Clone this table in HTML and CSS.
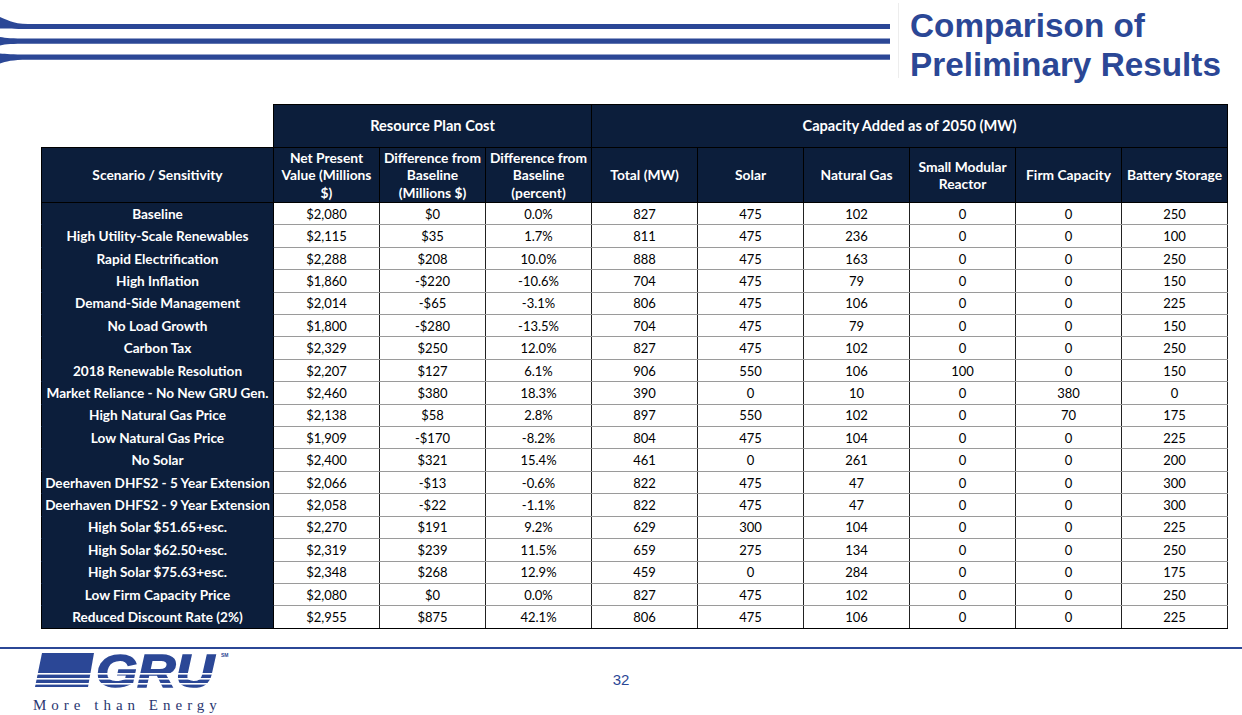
FILE: index.html
```html
<!DOCTYPE html>
<html>
<head>
<meta charset="utf-8">
<link rel="stylesheet" href="styles.css">
</head>
<body>
<div class="page">
  <header class="top">
    <svg class="lines" width="890" height="66" viewBox="0 0 890 66">
      <path d="M0,17 C6,19 12,24 28,24 L890,24 L890,29 L28,29 C14,29 6,28.5 0,28.5 Z" fill="#2b4796"/>
      <path d="M0,37 C6,38 12,38.5 28,38.5 L890,38.5 L890,43.8 L28,43.8 C12,43.8 6,44 0,45.5 Z" fill="#2b4796"/>
      <path d="M0,53.5 C6,54 12,54.5 28,54.5 L890,54.5 L890,59.8 L28,59.8 C12,59.8 6,61.5 0,63.5 Z" fill="#2b4796"/>
    </svg>
    <div class="divider"></div>
    <h1 class="title">Comparison of<br>Preliminary Results</h1>
  </header>

  <main class="table-wrap">
    <table class="data">
      <colgroup>
        <col class="c-first">
        <col class="c-num"><col class="c-num"><col class="c-num">
        <col class="c-num"><col class="c-num"><col class="c-num">
        <col class="c-num"><col class="c-num"><col class="c-num">
      </colgroup>
      <thead>
        <tr class="h1">
          <td class="blank"></td>
          <th colspan="3">Resource Plan Cost</th>
          <th colspan="6">Capacity Added as of 2050 (MW)</th>
        </tr>
        <tr class="h2">
          <th>Scenario / Sensitivity</th>
          <th>Net Present<br>Value (Millions<br>$)</th>
          <th>Difference from<br>Baseline<br>(Millions $)</th>
          <th>Difference from<br>Baseline<br>(percent)</th>
          <th>Total (MW)</th>
          <th>Solar</th>
          <th>Natural Gas</th>
          <th>Small Modular<br>Reactor</th>
          <th>Firm Capacity</th>
          <th>Battery Storage</th>
        </tr>
      </thead>
      <tbody>
        <tr><th>Baseline</th><td>$2,080</td><td>$0</td><td>0.0%</td><td>827</td><td>475</td><td>102</td><td>0</td><td>0</td><td>250</td></tr>
        <tr><th>High Utility-Scale Renewables</th><td>$2,115</td><td>$35</td><td>1.7%</td><td>811</td><td>475</td><td>236</td><td>0</td><td>0</td><td>100</td></tr>
        <tr><th>Rapid Electrification</th><td>$2,288</td><td>$208</td><td>10.0%</td><td>888</td><td>475</td><td>163</td><td>0</td><td>0</td><td>250</td></tr>
        <tr><th>High Inflation</th><td>$1,860</td><td>-$220</td><td>-10.6%</td><td>704</td><td>475</td><td>79</td><td>0</td><td>0</td><td>150</td></tr>
        <tr><th>Demand-Side Management</th><td>$2,014</td><td>-$65</td><td>-3.1%</td><td>806</td><td>475</td><td>106</td><td>0</td><td>0</td><td>225</td></tr>
        <tr><th>No Load Growth</th><td>$1,800</td><td>-$280</td><td>-13.5%</td><td>704</td><td>475</td><td>79</td><td>0</td><td>0</td><td>150</td></tr>
        <tr><th>Carbon Tax</th><td>$2,329</td><td>$250</td><td>12.0%</td><td>827</td><td>475</td><td>102</td><td>0</td><td>0</td><td>250</td></tr>
        <tr><th>2018 Renewable Resolution</th><td>$2,207</td><td>$127</td><td>6.1%</td><td>906</td><td>550</td><td>106</td><td>100</td><td>0</td><td>150</td></tr>
        <tr><th>Market Reliance - No New GRU Gen.</th><td>$2,460</td><td>$380</td><td>18.3%</td><td>390</td><td>0</td><td>10</td><td>0</td><td>380</td><td>0</td></tr>
        <tr><th>High Natural Gas Price</th><td>$2,138</td><td>$58</td><td>2.8%</td><td>897</td><td>550</td><td>102</td><td>0</td><td>70</td><td>175</td></tr>
        <tr><th>Low Natural Gas Price</th><td>$1,909</td><td>-$170</td><td>-8.2%</td><td>804</td><td>475</td><td>104</td><td>0</td><td>0</td><td>225</td></tr>
        <tr><th>No Solar</th><td>$2,400</td><td>$321</td><td>15.4%</td><td>461</td><td>0</td><td>261</td><td>0</td><td>0</td><td>200</td></tr>
        <tr><th>Deerhaven DHFS2 - 5 Year Extension</th><td>$2,066</td><td>-$13</td><td>-0.6%</td><td>822</td><td>475</td><td>47</td><td>0</td><td>0</td><td>300</td></tr>
        <tr><th>Deerhaven DHFS2 - 9 Year Extension</th><td>$2,058</td><td>-$22</td><td>-1.1%</td><td>822</td><td>475</td><td>47</td><td>0</td><td>0</td><td>300</td></tr>
        <tr><th>High Solar $51.65+esc.</th><td>$2,270</td><td>$191</td><td>9.2%</td><td>629</td><td>300</td><td>104</td><td>0</td><td>0</td><td>225</td></tr>
        <tr><th>High Solar $62.50+esc.</th><td>$2,319</td><td>$239</td><td>11.5%</td><td>659</td><td>275</td><td>134</td><td>0</td><td>0</td><td>250</td></tr>
        <tr><th>High Solar $75.63+esc.</th><td>$2,348</td><td>$268</td><td>12.9%</td><td>459</td><td>0</td><td>284</td><td>0</td><td>0</td><td>175</td></tr>
        <tr><th>Low Firm Capacity Price</th><td>$2,080</td><td>$0</td><td>0.0%</td><td>827</td><td>475</td><td>102</td><td>0</td><td>0</td><td>250</td></tr>
        <tr><th>Reduced Discount Rate (2%)</th><td>$2,955</td><td>$875</td><td>42.1%</td><td>806</td><td>475</td><td>106</td><td>0</td><td>0</td><td>225</td></tr>
      </tbody>
    </table>
  </main>

  <footer class="foot">
    <div class="logo">
      <div class="logo-mark">
        <svg width="200" height="54" viewBox="0 0 200 54">
          <polygon points="12,10 64,10 58,44 5,44" fill="#2b4796"/>
          <text x="66" y="44" font-family="Liberation Sans, Arial, sans-serif" font-weight="bold" font-style="italic" font-size="47" textLength="118" lengthAdjust="spacingAndGlyphs" fill="#2b4796" stroke="#2b4796" stroke-width="1.6">GRU</text>
          <rect x="0" y="30" width="200" height="1.6" fill="#fff"/>
          <rect x="0" y="35" width="200" height="1.6" fill="#fff"/>
          <rect x="0" y="40" width="200" height="1.6" fill="#fff"/>
        </svg>
        <span class="sm">SM</span>
      </div>
      <div class="tagline">More than Energy</div>
    </div>
    <div class="pagenum">32</div>
    <div class="spacer"></div>
  </footer>
</div>
</body>
</html>
```

FILE: styles.css
```css
* { box-sizing: border-box; }

html, body {
  margin: 0;
  padding: 0;
  background: #ffffff;
}

.page {
  width: 1242px;
  height: 715px;
  overflow: hidden;
  display: flex;
  flex-direction: column;
}

/* ---------- header ---------- */
.top {
  height: 104px;
  display: flex;
  align-items: flex-start;
  flex: none;
}

.lines {
  display: block;
  flex: none;
}

.divider {
  width: 1px;
  height: 75px;
  margin-top: 3px;
  margin-left: 8px;
  background: #ededed;
  flex: none;
}

.title {
  margin: 0;
  padding: 7px 0 0 11px;
  font-family: "Liberation Sans", Arial, sans-serif;
  font-weight: bold;
  font-size: 33.3px;
  line-height: 38.5px;
  color: #2b4796;
  white-space: nowrap;
}

/* ---------- table ---------- */
.table-wrap {
  padding-left: 41px;
  flex: none;
}

.data {
  border-collapse: collapse;
  table-layout: fixed;
  width: 1186px;
  font-family: Lato, "Open Sans", sans-serif;
  font-size: 13px;
  color: #000;
}

.c-first { width: 232px; }
.c-num { width: 106px; }

.data th,
.data td {
  padding: 0;
  text-align: center;
  vertical-align: middle;
  white-space: nowrap;
}

.data thead th {
  background: #0c1e3b;
  color: #fff;
  font-weight: bold;
  font-size: 13.8px;
  border: 1px solid #000;
  line-height: 17.5px;
}

.data .h1 th {
  font-size: 14.6px;
}

.data .blank {
  background: #fff;
  border: none;
}

.h1 { height: 43px; }
.h2 { height: 55px; }

.data tbody tr { height: 22.42px; }

.data tbody th {
  background: #0c1e3b;
  color: #fff;
  font-weight: bold;
  font-size: 13.6px;
  border-left: 1px solid #000;
  border-right: 1px solid #000;
  border-bottom: 1px solid #0c1e3b;
  line-height: 16px;
}

.data tbody td {
  border-left: 1px solid #222;
  border-right: 1px solid #222;
  border-bottom: 1px solid #9a9a9a;
  line-height: 16px;
}

.data tbody tr:last-child td,
.data tbody tr:last-child th {
  border-bottom: 1px solid #000;
}

/* ---------- footer ---------- */
.foot {
  margin-top: 18px;
  border-top: 2px solid #2b4796;
  display: grid;
  grid-template-columns: 1fr auto 1fr;
  align-items: start;
  padding-top: 3px;
  flex: none;
}

.logo {
  padding-left: 30px;
}

.logo-mark {
  position: relative;
  width: 200px;
  height: 54px;
  margin-top: -9px;
}

.logo-mark svg {
  display: block;
}

.sm {
  position: absolute;
  left: 191px;
  top: 9px;
  font-family: "Liberation Sans", Arial, sans-serif;
  font-size: 5px;
  font-weight: bold;
  color: #2b4796;
}

.tagline {
  margin-left: 3px;
  font-family: "Liberation Serif", "Times New Roman", serif;
  font-size: 15px;
  letter-spacing: 5px;
  color: #2a3670;
  line-height: 16px;
  white-space: nowrap;
}

.pagenum {
  padding-top: 19px;
  font-family: "Liberation Sans", Arial, sans-serif;
  font-size: 15px;
  color: #2b4796;
}
```
